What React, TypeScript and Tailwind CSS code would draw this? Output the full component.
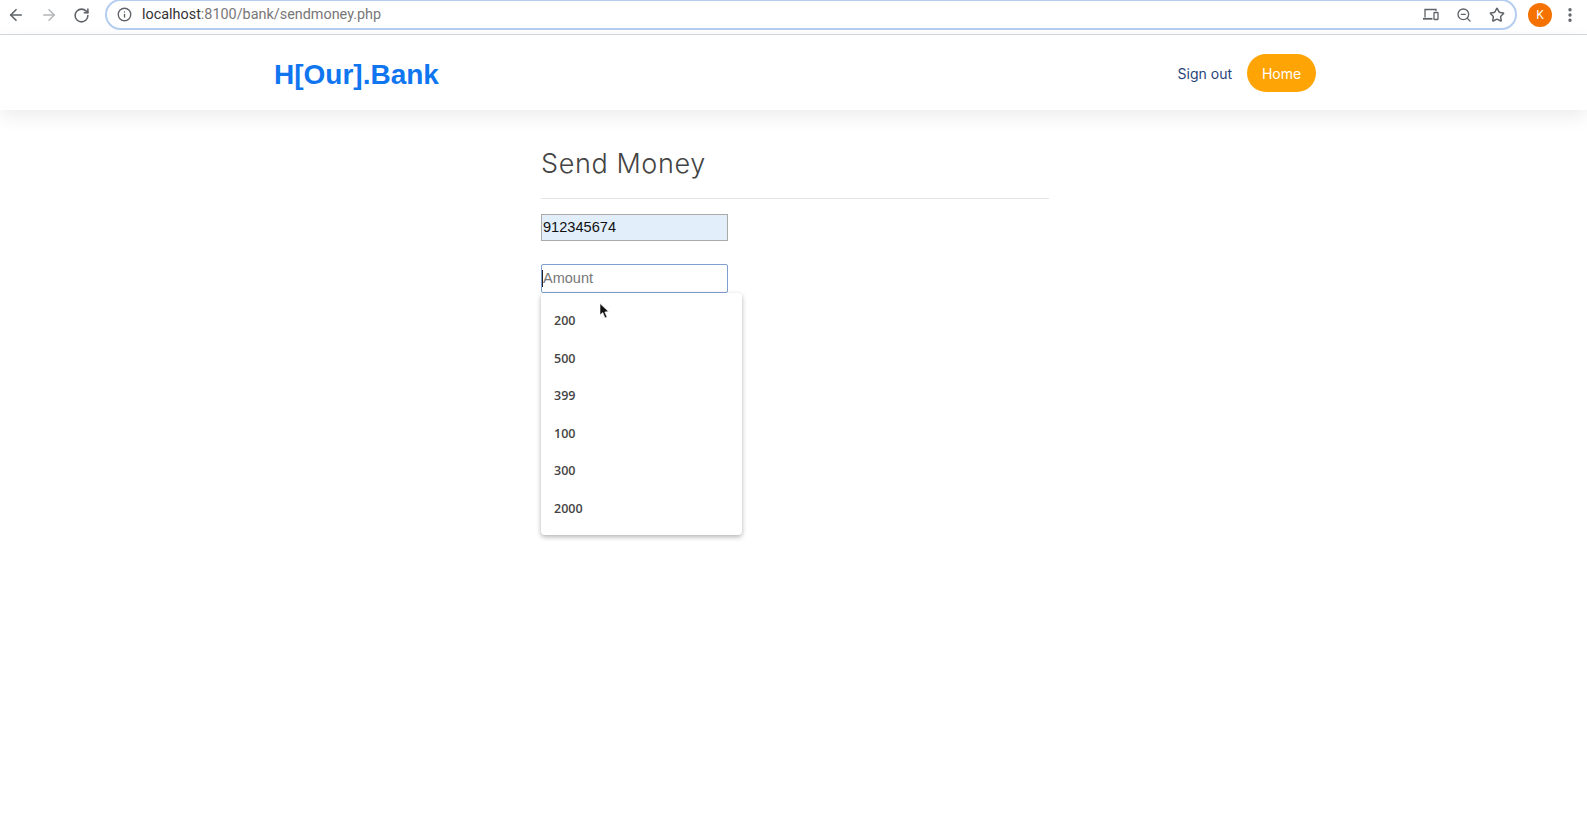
import { ArrowLeft, ArrowRight, RotateCw, Info, ZoomOut, Star, MoreVertical } from 'lucide-react';

const SUGGESTIONS = ['200', '500', '399', '100', '300', '2000'];

function BrowserBar() {
  return (
    <div className="h-[35px] flex items-center bg-white border-b border-[#d5d9e0] pb-[4px] font-['Roboto',sans-serif]">
      <div className="w-[105px] pl-[7px] flex items-center gap-[15px] shrink-0">
        <ArrowLeft size={18} strokeWidth={2.2} className="text-[#5f6368]" />
        <ArrowRight size={18} className="text-[#b4b6b9]" />
        <RotateCw size={17} strokeWidth={2.2} className="text-[#5f6368]" />
      </div>
      <div className="w-[1412px] h-[31px] shrink-0 rounded-full border-2 border-[#b4cdf0] flex items-center pl-[10px] pr-[10px] -mt-[1px]">
        <Info size={15} strokeWidth={2.2} className="text-[#5f6368]" />
        <span className="ml-[10px] text-[14.4px] text-[#777]">
          <span className="text-[#333]">localhost</span>:8100/bank/sendmoney.php
        </span>
        <div className="ml-auto flex items-center gap-[17px]">
          <svg width="16" height="13" viewBox="0 0 16 13" fill="none" stroke="#5f6368" strokeWidth="1.3">
            <path d="M2 9.5V1.5h11v1.5" />
            <path d="M0 10.8h9.5" strokeWidth="1.8" />
            <rect x="11" y="4.5" width="4" height="7" rx="0.5" />
          </svg>
          <ZoomOut size={16} className="text-[#5f6368]" />
          <Star size={16} strokeWidth={2.2} className="text-[#5f6368]" />
        </div>
      </div>
      <div className="ml-[11px] w-[24px] h-[24px] rounded-full bg-[#f57200] text-white text-[12px] flex items-center justify-center shrink-0">K</div>
      <MoreVertical size={18} strokeWidth={2.5} className="ml-[9px] text-[#5f6368] shrink-0" />
    </div>
  );
}

function Header() {
  return (
    <header className="h-[75px] bg-white shadow-[0_6px_18px_rgba(0,0,0,0.08)] flex items-center pl-[274px] pr-[271px] relative">
      <span className="text-[28px] font-bold text-[#0f76f0] font-['Liberation_Sans',sans-serif] mt-[4px]">H[Our].Bank</span>
      <nav className="ml-auto flex items-center gap-[15px] mt-[1px] font-['Inter',sans-serif] text-[14px]">
        <a className="text-[#27457a]">Sign out</a>
        <a className="w-[69px] h-[38px] rounded-full bg-[#ffa405] text-white flex items-center justify-center">Home</a>
      </nav>
    </header>
  );
}

export default function App() {
  return (
    <div className="w-[1587px] h-[819px] bg-white overflow-hidden">
      <BrowserBar />
      <Header />
      <main className="w-[508px] ml-[541px] pt-[36px] relative">
        <h1 className="text-[27px] leading-[36px] font-light text-[#444] font-['Inter',sans-serif] tracking-[0.6px]">Send Money</h1>
        <hr className="mt-[16px] border-[#e4e4e4]" />
        <div className="mt-[15px] w-[187px] h-[27px] border border-[#aaa] bg-[#e3eefb] px-[1px] text-[14.6px] leading-[25px] text-[#111] font-['Liberation_Sans',sans-serif]">
          912345674
        </div>
        <div className="mt-[23px] w-[187px] h-[29px] border-[1.5px] border-[#7f9fd0] rounded-[2px] bg-white text-[14.5px] leading-[25px] text-[#777] font-['Liberation_Sans',sans-serif] flex items-center">
          <span className="w-px h-[17px] bg-[#222]" />
          <span>Amount</span>
        </div>
        <ul className="absolute left-0 top-[183px] w-[201px] h-[242px] bg-white rounded-[4px] shadow-[0_2px_5px_rgba(0,0,0,0.3)] pt-[10px] font-['Open_Sans',sans-serif] text-[12.5px] font-semibold text-[#444]">
          {SUGGESTIONS.map((s) => (
            <li key={s} className="h-[37.5px] flex items-center pl-[13px]">{s}</li>
          ))}
        </ul>
        <svg className="absolute left-[58px] top-[193px]" width="11" height="17" viewBox="0 0 11 17">
          <path d="M1 0.5 L1 12 L3.8 9.6 L6 15 L8 14 L5.8 9 L9.5 8.6 Z" fill="#111" stroke="#fff" strokeWidth="0.6" />
        </svg>
      </main>
    </div>
  );
}
